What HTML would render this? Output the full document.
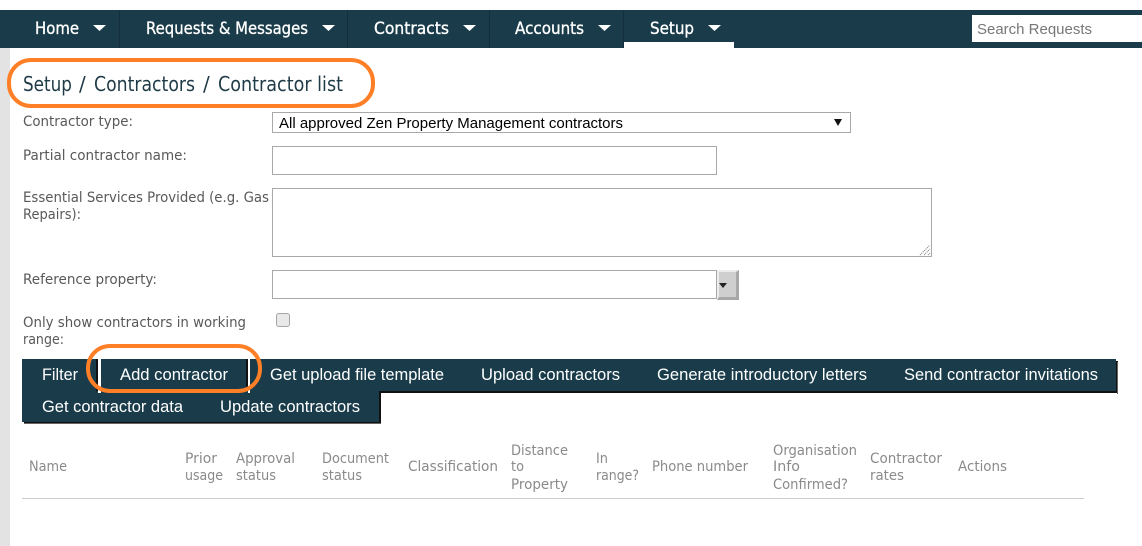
<!DOCTYPE html>
<html><head><meta charset="utf-8"><style>
html,body{margin:0;padding:0;background:#fff;width:1142px;height:546px;overflow:hidden}
svg{display:block}
text{font-family:"DejaVu Sans",sans-serif;white-space:pre}
.n{fill:#fff;font-size:17px;stroke:#fff;stroke-width:.35px}
.b{font-family:"Liberation Sans",sans-serif;fill:#fff;font-size:17px}
.l{fill:#595959;font-size:14.500px}
.h{fill:#8a8a8a;font-size:14.500px}
.c{fill:#1f3b47;font-size:20px}
</style></head><body>
<svg width="1142" height="546" viewBox="0 0 1142 546" xmlns="http://www.w3.org/2000/svg">
<rect x="0" y="48" width="10" height="498" fill="#e3e3e3"/>
<rect x="0" y="10" width="1142" height="38" fill="#1a3c4a"/>
<g fill="#122f3b"><rect x="119" y="10" width="1" height="38"/><rect x="347" y="10" width="1" height="38"/><rect x="489" y="10" width="1" height="38"/><rect x="623" y="10" width="1" height="38"/></g>
<rect x="624" y="42" width="110" height="6" fill="#fff"/>
<text class="n" x="35" y="34" textLength="44" lengthAdjust="spacingAndGlyphs">Home</text>
<text class="n" x="146" y="34" textLength="162" lengthAdjust="spacingAndGlyphs">Requests &amp; Messages</text>
<text class="n" x="374" y="34" textLength="75" lengthAdjust="spacingAndGlyphs">Contracts</text>
<text class="n" x="515" y="34" textLength="69" lengthAdjust="spacingAndGlyphs">Accounts</text>
<text class="n" x="650" y="34" textLength="44" lengthAdjust="spacingAndGlyphs">Setup</text>
<g fill="#fff"><path d="M93 25h13l-6.500 6z"/><path d="M322 25h13l-6.500 6z"/><path d="M463 25h13l-6.500 6z"/><path d="M598 25h13l-6.500 6z"/><path d="M708 25h13l-6.500 6z"/></g>
<rect x="972" y="15" width="170" height="27" fill="#fff"/>
<text x="977" y="34" font-size="15" fill="#777" style="font-family:'Liberation Sans',sans-serif" textLength="115" lengthAdjust="spacingAndGlyphs">Search Requests</text>

<text class="c" x="23" y="91" textLength="49" lengthAdjust="spacingAndGlyphs">Setup</text>
<text class="c" x="79" y="91">/</text>
<text class="c" x="94" y="91" textLength="101" lengthAdjust="spacingAndGlyphs">Contractors</text>
<text class="c" x="203" y="91">/</text>
<text class="c" x="218" y="91" textLength="125" lengthAdjust="spacingAndGlyphs">Contractor list</text>
<rect x="9" y="60" width="364" height="46" rx="22" fill="none" stroke="#ff7f27" stroke-width="4"/>

<text class="l" x="23" y="126" textLength="110" lengthAdjust="spacingAndGlyphs">Contractor type:</text>
<rect x="272.500" y="112.500" width="578" height="20" fill="#fff" stroke="#a9a9a9"/>
<text x="279" y="128" font-size="15" fill="#000" style="font-family:'Liberation Sans',sans-serif" textLength="344" lengthAdjust="spacingAndGlyphs">All approved Zen Property Management contractors</text>
<path d="M834 119h8l-4 7z" fill="#111"/>

<text class="l" x="23" y="160" textLength="164" lengthAdjust="spacingAndGlyphs">Partial contractor name:</text>
<rect x="272.500" y="146.500" width="444" height="28" fill="#fff" stroke="#a9a9a9"/>

<text class="l" x="23" y="202" textLength="246" lengthAdjust="spacingAndGlyphs">Essential Services Provided (e.g. Gas</text>
<text class="l" x="23" y="219" textLength="58" lengthAdjust="spacingAndGlyphs">Repairs):</text>
<rect x="272.500" y="188.500" width="659" height="68" fill="#fff" stroke="#a9a9a9"/>
<path d="M920 255L930 245M924 255L930 249M928 255L930 253" stroke="#777" stroke-width="1" stroke-dasharray="1 1" fill="none"/>

<text class="l" x="23" y="284" textLength="134" lengthAdjust="spacingAndGlyphs">Reference property:</text>
<rect x="272.500" y="270.500" width="444" height="28" fill="#fff" stroke="#a9a9a9"/>
<rect x="717" y="270" width="22" height="30" fill="#cfcfcf"/>
<path d="M717 270h22l-2 2h-18v26l-2 2z" fill="#ececec"/>
<path d="M739 270v30h-22l2-3h17v-25z" fill="#a8a8a8"/>
<path d="M719 283h8l-4 5z" fill="#222"/>

<text class="l" x="23" y="327" textLength="223" lengthAdjust="spacingAndGlyphs">Only show contractors in working</text>
<text class="l" x="23" y="344" textLength="41" lengthAdjust="spacingAndGlyphs">range:</text>
<rect x="276.500" y="313.500" width="13" height="13" rx="2.500" fill="#e9e9e9" stroke="#a5a5a5"/>

<rect x="24" y="361" width="1094" height="32" fill="#111"/>
<rect x="1117" y="362" width="1" height="32" fill="#666"/>
<rect x="24" y="393" width="357" height="31" fill="#111"/>
<rect x="24" y="423" width="357" height="1" fill="#666"/>
<rect x="22" y="359" width="1094" height="32" fill="#1a3c4a"/>
<rect x="22" y="391" width="357" height="31" fill="#1a3c4a"/>
<rect x="96" y="359" width="2" height="32" fill="#111"/>
<rect x="98" y="359" width="3" height="34" fill="#fff"/>
<rect x="246" y="359" width="2" height="32" fill="#111"/>
<rect x="248" y="359" width="2" height="34" fill="#fff"/>
<text class="b" x="42" y="380" textLength="36" lengthAdjust="spacingAndGlyphs">Filter</text>
<text class="b" x="120" y="380" textLength="108" lengthAdjust="spacingAndGlyphs">Add contractor</text>
<text class="b" x="270" y="380" textLength="174" lengthAdjust="spacingAndGlyphs">Get upload file template</text>
<text class="b" x="481" y="380" textLength="139" lengthAdjust="spacingAndGlyphs">Upload contractors</text>
<text class="b" x="657" y="380" textLength="210" lengthAdjust="spacingAndGlyphs">Generate introductory letters</text>
<text class="b" x="904" y="380" textLength="194" lengthAdjust="spacingAndGlyphs">Send contractor invitations</text>
<text class="b" x="42" y="412" textLength="141" lengthAdjust="spacingAndGlyphs">Get contractor data</text>
<text class="b" x="220" y="412" textLength="140" lengthAdjust="spacingAndGlyphs">Update contractors</text>
<rect x="88" y="346" width="172" height="45" rx="22" fill="none" stroke="#ff7f27" stroke-width="4"/>

<text class="h" x="29" y="471" textLength="38" lengthAdjust="spacingAndGlyphs">Name</text>
<text class="h" x="185" y="463" textLength="32" lengthAdjust="spacingAndGlyphs">Prior</text>
<text class="h" x="185" y="480" textLength="38" lengthAdjust="spacingAndGlyphs">usage</text>
<text class="h" x="236" y="463" textLength="59" lengthAdjust="spacingAndGlyphs">Approval</text>
<text class="h" x="236" y="480" textLength="40" lengthAdjust="spacingAndGlyphs">status</text>
<text class="h" x="322" y="463" textLength="67" lengthAdjust="spacingAndGlyphs">Document</text>
<text class="h" x="322" y="480" textLength="40" lengthAdjust="spacingAndGlyphs">status</text>
<text class="h" x="408" y="471" textLength="90" lengthAdjust="spacingAndGlyphs">Classification</text>
<text class="h" x="511" y="455" textLength="57" lengthAdjust="spacingAndGlyphs">Distance</text>
<text class="h" x="511" y="471" textLength="13" lengthAdjust="spacingAndGlyphs">to</text>
<text class="h" x="511" y="489" textLength="57" lengthAdjust="spacingAndGlyphs">Property</text>
<text class="h" x="596" y="463" textLength="12" lengthAdjust="spacingAndGlyphs">In</text>
<text class="h" x="596" y="480" textLength="43" lengthAdjust="spacingAndGlyphs">range?</text>
<text class="h" x="652" y="471" textLength="96" lengthAdjust="spacingAndGlyphs">Phone number</text>
<text class="h" x="773" y="455" textLength="84" lengthAdjust="spacingAndGlyphs">Organisation</text>
<text class="h" x="773" y="471" textLength="27" lengthAdjust="spacingAndGlyphs">Info</text>
<text class="h" x="773" y="489" textLength="75" lengthAdjust="spacingAndGlyphs">Confirmed?</text>
<text class="h" x="870" y="463" textLength="72" lengthAdjust="spacingAndGlyphs">Contractor</text>
<text class="h" x="870" y="480" textLength="34" lengthAdjust="spacingAndGlyphs">rates</text>
<text class="h" x="958" y="471" textLength="49" lengthAdjust="spacingAndGlyphs">Actions</text>
<rect x="22" y="498" width="1062" height="1" fill="#ccc"/>
</svg>
</body></html>
